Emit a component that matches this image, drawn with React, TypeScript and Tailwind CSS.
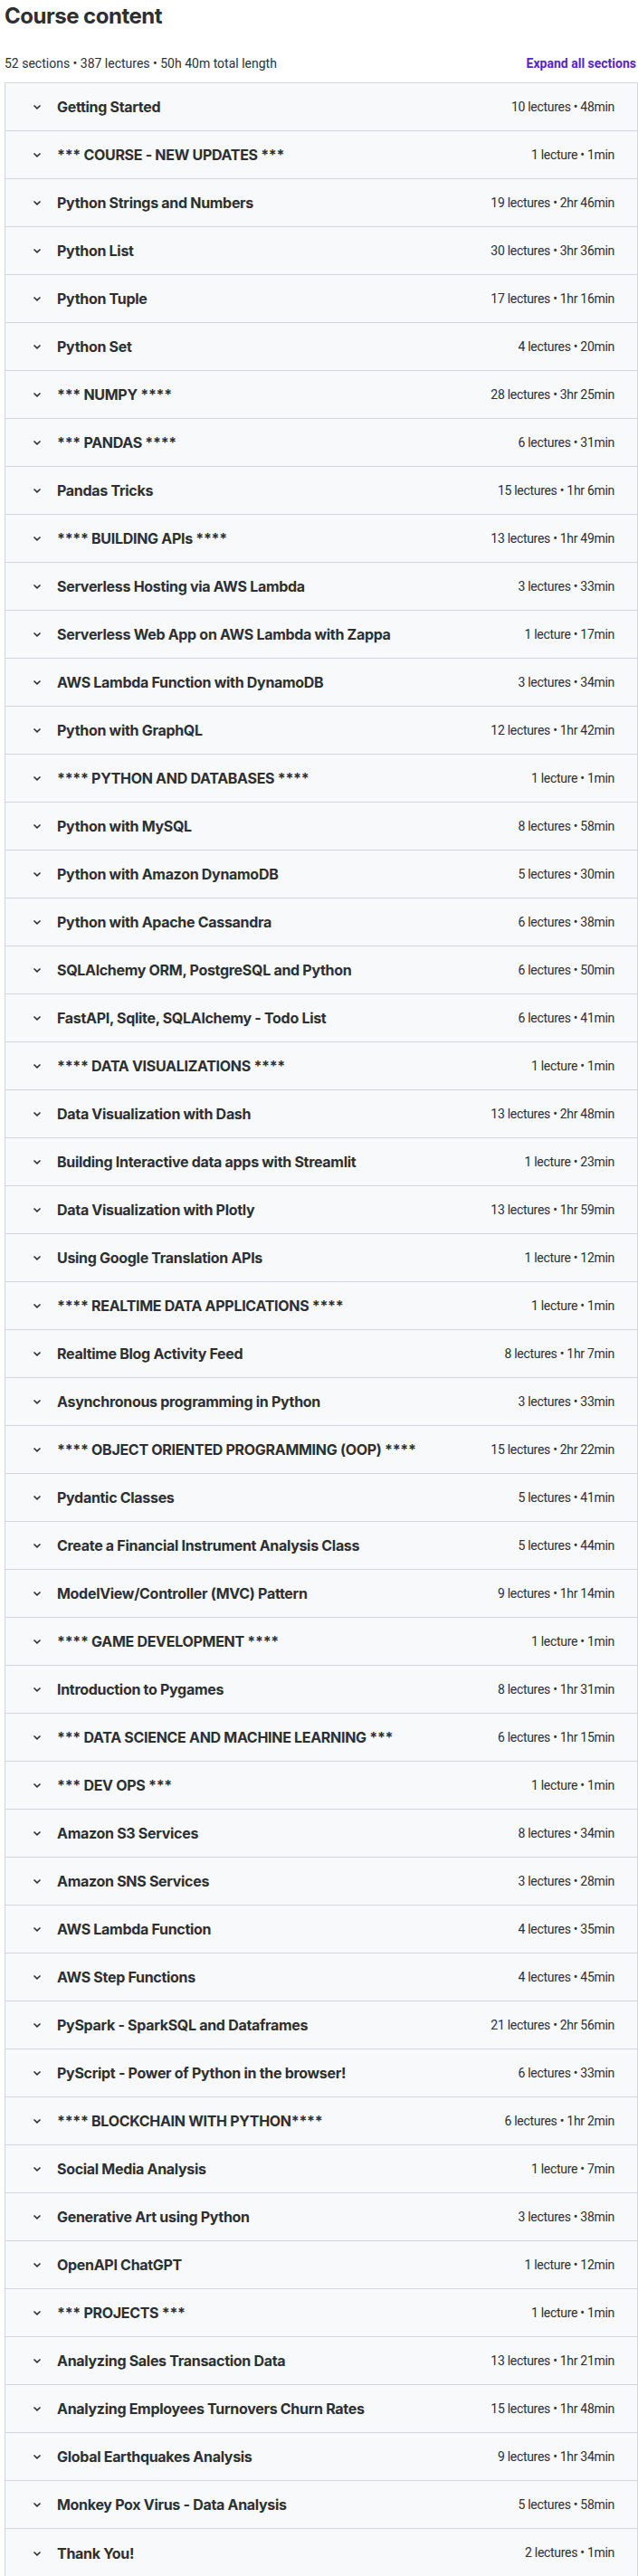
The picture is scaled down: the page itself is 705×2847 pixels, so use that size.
import React from "react";

type Section = { title: string; meta: string };

const sections: Section[] = [
  { title: "Getting Started", meta: "10 lectures • 48min" },
  { title: "*** COURSE - NEW UPDATES ***", meta: "1 lecture • 1min" },
  { title: "Python Strings and Numbers", meta: "19 lectures • 2hr 46min" },
  { title: "Python List", meta: "30 lectures • 3hr 36min" },
  { title: "Python Tuple", meta: "17 lectures • 1hr 16min" },
  { title: "Python Set", meta: "4 lectures • 20min" },
  { title: "*** NUMPY ****", meta: "28 lectures • 3hr 25min" },
  { title: "*** PANDAS ****", meta: "6 lectures • 31min" },
  { title: "Pandas Tricks", meta: "15 lectures • 1hr 6min" },
  { title: "**** BUILDING APIs ****", meta: "13 lectures • 1hr 49min" },
  { title: "Serverless Hosting via AWS Lambda", meta: "3 lectures • 33min" },
  { title: "Serverless Web App on AWS Lambda with Zappa", meta: "1 lecture • 17min" },
  { title: "AWS Lambda Function with DynamoDB", meta: "3 lectures • 34min" },
  { title: "Python with GraphQL", meta: "12 lectures • 1hr 42min" },
  { title: "**** PYTHON AND DATABASES ****", meta: "1 lecture • 1min" },
  { title: "Python with MySQL", meta: "8 lectures • 58min" },
  { title: "Python with Amazon DynamoDB", meta: "5 lectures • 30min" },
  { title: "Python with Apache Cassandra", meta: "6 lectures • 38min" },
  { title: "SQLAlchemy ORM, PostgreSQL and Python", meta: "6 lectures • 50min" },
  { title: "FastAPI, Sqlite, SQLAlchemy - Todo List", meta: "6 lectures • 41min" },
  { title: "**** DATA VISUALIZATIONS ****", meta: "1 lecture • 1min" },
  { title: "Data Visualization with Dash", meta: "13 lectures • 2hr 48min" },
  { title: "Building Interactive data apps with Streamlit", meta: "1 lecture • 23min" },
  { title: "Data Visualization with Plotly", meta: "13 lectures • 1hr 59min" },
  { title: "Using Google Translation APIs", meta: "1 lecture • 12min" },
  { title: "**** REALTIME DATA APPLICATIONS ****", meta: "1 lecture • 1min" },
  { title: "Realtime Blog Activity Feed", meta: "8 lectures • 1hr 7min" },
  { title: "Asynchronous programming in Python", meta: "3 lectures • 33min" },
  { title: "**** OBJECT ORIENTED PROGRAMMING (OOP) ****", meta: "15 lectures • 2hr 22min" },
  { title: "Pydantic Classes", meta: "5 lectures • 41min" },
  { title: "Create a Financial Instrument Analysis Class", meta: "5 lectures • 44min" },
  { title: "ModelView/Controller (MVC) Pattern", meta: "9 lectures • 1hr 14min" },
  { title: "**** GAME DEVELOPMENT ****", meta: "1 lecture • 1min" },
  { title: "Introduction to Pygames", meta: "8 lectures • 1hr 31min" },
  { title: "*** DATA SCIENCE AND MACHINE LEARNING ***", meta: "6 lectures • 1hr 15min" },
  { title: "*** DEV OPS ***", meta: "1 lecture • 1min" },
  { title: "Amazon S3 Services", meta: "8 lectures • 34min" },
  { title: "Amazon SNS Services", meta: "3 lectures • 28min" },
  { title: "AWS Lambda Function", meta: "4 lectures • 35min" },
  { title: "AWS Step Functions", meta: "4 lectures • 45min" },
  { title: "PySpark - SparkSQL and Dataframes", meta: "21 lectures • 2hr 56min" },
  { title: "PyScript - Power of Python in the browser!", meta: "6 lectures • 33min" },
  { title: "**** BLOCKCHAIN WITH PYTHON****", meta: "6 lectures • 1hr 2min" },
  { title: "Social Media Analysis", meta: "1 lecture • 7min" },
  { title: "Generative Art using Python", meta: "3 lectures • 38min" },
  { title: "OpenAPI ChatGPT", meta: "1 lecture • 12min" },
  { title: "*** PROJECTS ***", meta: "1 lecture • 1min" },
  { title: "Analyzing Sales Transaction Data", meta: "13 lectures • 1hr 21min" },
  { title: "Analyzing Employees Turnovers Churn Rates", meta: "15 lectures • 1hr 48min" },
  { title: "Global Earthquakes Analysis", meta: "9 lectures • 1hr 34min" },
  { title: "Monkey Pox Virus - Data Analysis", meta: "5 lectures • 58min" },
  { title: "Thank You!", meta: "2 lectures • 1min" },
];

const Chevron = () => (
  <svg width="16" height="16" viewBox="0 0 16 16" className="shrink-0">
    <path d="M4.5 6.5 8 9.8l3.5-3.3" fill="none" stroke="#2d2f31" strokeWidth="1.6" />
  </svg>
);

const SectionRow: React.FC<{ section: Section; last: boolean }> = ({ section, last }) => (
  <div
    className={`flex h-[53px] items-center bg-[#f7f9fa] pl-[27px] pr-[25px] ${
      last ? "" : "border-b border-[#d1d7dc]"
    }`}
  >
    <Chevron />
    <span className="ml-[14px] flex-1 truncate font-['Inter',sans-serif] text-[16px] font-bold tracking-[-0.3px] text-[#2d2f31]">
      {section.title}
    </span>
    <span className="ml-4 shrink-0 text-[14px] tracking-[-0.3px] text-[#2d2f31]">
      {section.meta}
    </span>
  </div>
);

export default function App() {
  return (
    <div className="bg-white pl-[5px] font-['Roboto',sans-serif] text-[#2d2f31]">
      <h2 className="pt-[3px] font-['Inter',sans-serif] text-[24px] font-bold leading-[29px] tracking-[-0.5px]">
        Course content
      </h2>
      <div className="mt-[28px] flex items-center justify-between">
        <span className="text-[14px] leading-[20px]">
          52 sections • 387 lectures • 50h 40m total length
        </span>
        <button className="pr-[2px] text-[14px] font-bold leading-[20px] text-[#5624d0]">
          Expand all sections
        </button>
      </div>
      <div className="mt-[11px] border border-[#d1d7dc]">
        {sections.map((s, i) => (
          <SectionRow key={i} section={s} last={i === sections.length - 1} />
        ))}
      </div>
    </div>
  );
}
